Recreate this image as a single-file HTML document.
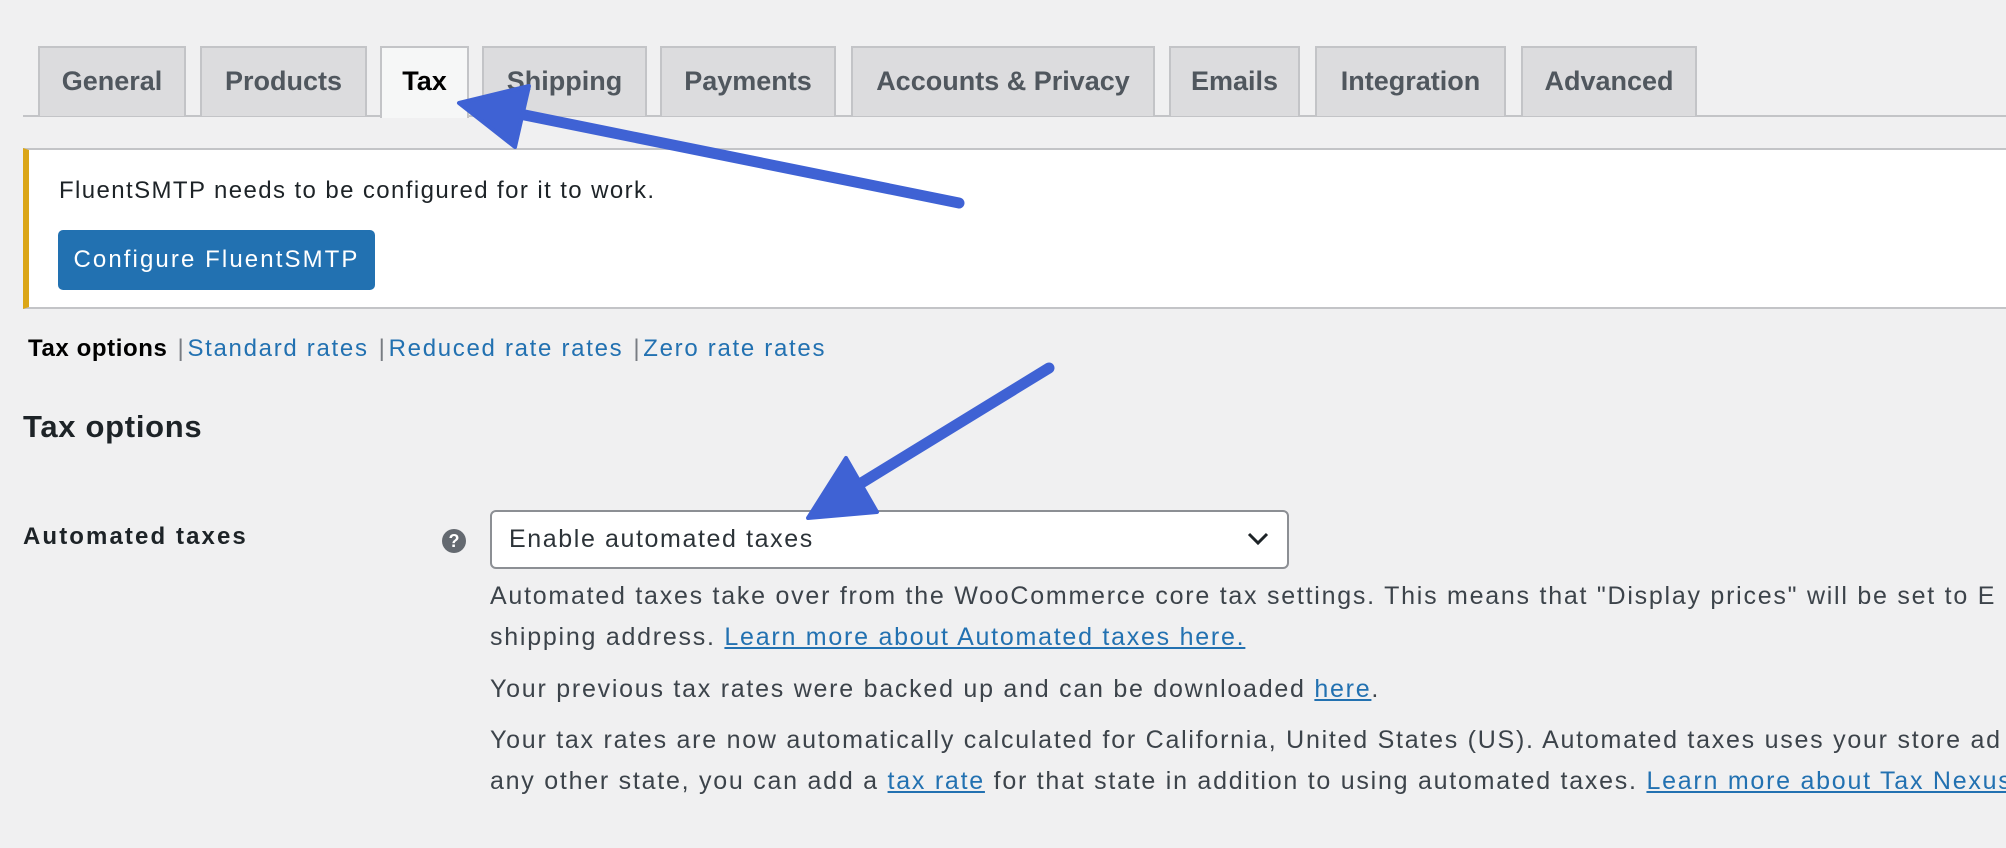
<!DOCTYPE html>
<html><head><meta charset="utf-8"><style>
*{margin:0;padding:0;box-sizing:border-box}
body{width:2006px;height:848px;background:#f0f0f1;font-family:"Liberation Sans",sans-serif;color:#1d2327;position:relative;overflow:hidden}
.tabs{position:absolute;left:23px;top:46px;right:0;height:71px;border-bottom:2px solid #c3c4c7}
.tab{position:absolute;top:0;height:70px;background:#dcdcde;border:2px solid #c3c4c7;border-bottom:none;font-weight:bold;font-size:27px;color:#50575e;text-align:center;line-height:66px}
.tab.on{background:#f6f7f7;color:#000;height:72px}
.notice{position:absolute;left:23px;top:148px;right:0;height:161px;background:#fff;border:2px solid #c3c4c7;border-left:6px solid #dba617;border-right:none}
.notice p{position:absolute;left:30px;top:27px;font-size:24px;color:#1d2327;letter-spacing:1.4px;white-space:nowrap}
.btn{position:absolute;left:29px;top:80px;width:317px;height:60px;background:#2271b1;border-radius:5px;color:#fff;font-size:24px;line-height:60px;text-align:center;letter-spacing:2.1px;white-space:nowrap}
.sub{position:absolute;left:28px;top:335px;font-size:24px;color:#2271b1;white-space:nowrap;letter-spacing:1.7px}
.sub b{color:#000;letter-spacing:0.6px}.sub .sep{color:#787c82;margin:0 2px 0 10px}
h2{position:absolute;left:23px;top:409px;font-size:31px;font-weight:bold;letter-spacing:0.7px}
.lbl{position:absolute;left:23px;top:523px;font-size:24px;font-weight:bold;letter-spacing:2.1px}
.help{position:absolute;left:442px;top:529px;width:24px;height:24px;border-radius:50%;background:#646970;color:#fff;font-size:18px;font-weight:bold;text-align:center;line-height:24px}
.sel{position:absolute;left:490px;top:510px;width:799px;height:59px;background:#fff;border:2px solid #8c8f94;border-radius:6px;font-size:25px;line-height:55px;padding-left:17px;color:#2c3338;letter-spacing:1.6px}
.desc{position:absolute;left:490px;font-size:25px;color:#3c434a;white-space:nowrap;letter-spacing:1.75px}
a{color:#2271b1;text-decoration:underline}
</style></head><body>
<div class="tabs">
<div class="tab" style="left:15px;width:148px">General</div>
<div class="tab" style="left:177px;width:167px">Products</div>
<div class="tab on" style="left:357px;width:89px">Tax</div>
<div class="tab" style="left:459px;width:165px">Shipping</div>
<div class="tab" style="left:637px;width:176px">Payments</div>
<div class="tab" style="left:828px;width:304px">Accounts &amp; Privacy</div>
<div class="tab" style="left:1146px;width:131px">Emails</div>
<div class="tab" style="left:1292px;width:191px">Integration</div>
<div class="tab" style="left:1498px;width:176px">Advanced</div>
</div>
<div class="notice"><p>FluentSMTP needs to be configured for it to work.</p><div class="btn">Configure FluentSMTP</div></div>
<div class="sub"><b>Tax options</b><span class="sep">|</span>Standard rates<span class="sep">|</span>Reduced rate rates<span class="sep">|</span>Zero rate rates</div>
<h2>Tax options</h2>
<div class="lbl">Automated taxes</div>
<div class="help">?</div>
<div class="sel">Enable automated taxes
<svg style="position:absolute;right:18px;top:20px" width="22" height="14" viewBox="0 0 22 14"><path d="M2 2l9 9 9-9" fill="none" stroke="#1d2327" stroke-width="3"/></svg></div>
<div class="desc" style="top:582px">Automated taxes take over from the WooCommerce core tax settings. This means that "Display prices" will be set to E</div>
<div class="desc" style="top:623px">shipping address. <a>Learn more about Automated taxes here.</a></div>
<div class="desc" style="top:675px">Your previous tax rates were backed up and can be downloaded <a>here</a>.</div>
<div class="desc" style="top:726px">Your tax rates are now automatically calculated for California, United States (US). Automated taxes uses your store ad</div>
<div class="desc" style="top:767px">any other state, you can add a <a>tax rate</a> for that state in addition to using automated taxes. <a>Learn more about Tax Nexus</a></div>
<svg style="position:absolute;left:0;top:0" width="2006" height="848">
<g fill="#3f62d4" stroke="#3f62d4" stroke-linecap="round" stroke-linejoin="round">
<line x1="959" y1="203" x2="500" y2="110" stroke-width="11"/>
<polygon points="459,103 529,86 515,147" stroke-width="4"/>
<line x1="1049" y1="368" x2="850" y2="490" stroke-width="11"/>
<polygon points="808,518 846,458 877,512" stroke-width="4"/>
</g></svg>
</body></html>
